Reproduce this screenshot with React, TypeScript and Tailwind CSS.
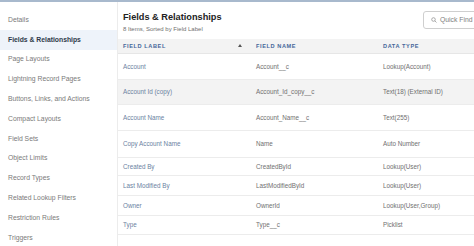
import React from 'react';

const navItems = [
  'Details',
  'Fields & Relationships',
  'Page Layouts',
  'Lightning Record Pages',
  'Buttons, Links, and Actions',
  'Compact Layouts',
  'Field Sets',
  'Object Limits',
  'Record Types',
  'Related Lookup Filters',
  'Restriction Rules',
  'Triggers',
];

const rows = [
  { label: 'Account', name: 'Account__c', type: 'Lookup(Account)', h: 'h-[26px]' },
  { label: 'Account Id (copy)', name: 'Account_Id_copy__c', type: 'Text(18) (External ID)', h: 'h-[25px]', shaded: true },
  { label: 'Account Name', name: 'Account_Name__c', type: 'Text(255)', h: 'h-[26px]' },
  { label: 'Copy Account Name', name: 'Name', type: 'Auto Number', h: 'h-[27px]' },
  { label: 'Created By', name: 'CreatedById', type: 'Lookup(User)', h: 'h-[18px]' },
  { label: 'Last Modified By', name: 'LastModifiedById', type: 'Lookup(User)', h: 'h-[20px]' },
  { label: 'Owner', name: 'OwnerId', type: 'Lookup(User,Group)', h: 'h-[20px]' },
  { label: 'Type', name: 'Type__c', type: 'Picklist', h: 'h-[19px]' },
  { label: '', name: '', type: '', h: 'h-[20px]' },
];

export default function App() {
  return (
    <div
      className="w-[474px] h-[246px] overflow-hidden bg-white text-[#6a6a6a]"
      style={{ fontFamily: '"Liberation Sans", Arial, sans-serif' }}
    >
      <div className="h-[2px] bg-[#a8b9cd]" />
      <div className="flex h-[244px]">
        {/* Sidebar */}
        <aside className="w-[118px] shrink-0 border-r border-[#ececec] pt-[8px]">
          {navItems.map((item, i) => (
            <div
              key={item}
              className={`h-[19.8px] flex items-center pl-[8px] text-[6.8px] ${
                i === 1 ? 'bg-[#eef3fa] font-bold text-[#2f3a4a]' : 'text-[#7a7a7a]'
              }`}
            >
              {item}
            </div>
          ))}
        </aside>

        {/* Main */}
        <main className="flex-1 min-w-0">
          <div className="flex justify-between h-[35px]">
            <div className="pl-[5px] pt-[10px]">
              <h1 className="text-[9.2px] font-bold text-[#222] leading-[11px]">Fields &amp; Relationships</h1>
              <p className="text-[6px] text-[#707070] mt-[3px] leading-[7px]">8 Items, Sorted by Field Label</p>
            </div>
            <div className="mt-[9px] w-[62px] h-[18px] border border-[#cfcfcf] rounded-[3px] flex items-center gap-[3px] pl-[7px] shrink-0 -mr-[11px]">
              <svg width="6" height="6" viewBox="0 0 12 12" fill="none" stroke="#8a8a8a" strokeWidth="1.4">
                <circle cx="5" cy="5" r="3.6" />
                <path d="M7.7 7.7 L11 11" />
              </svg>
              <span className="text-[6.8px] text-[#808080]">Quick Find</span>
            </div>
          </div>

          {/* Table header */}
          <div className="mt-[2px] h-[15px] bg-[#f3f3f3] border-b border-[#e6e6e6] grid grid-cols-[133px_127px_1fr] items-center text-[5.6px] font-bold tracking-[0.6px] text-[#47679a]">
            <div className="pl-[5px] pr-[9px] flex items-center justify-between">
              <span>FIELD LABEL</span>
              <svg width="4" height="3" viewBox="0 0 4 3" fill="#555">
                <path d="M2 0 L4 3 L0 3 Z" />
              </svg>
            </div>
            <div className="pl-[5px]">FIELD NAME</div>
            <div className="pl-[5px]">DATA TYPE</div>
          </div>

          {/* Rows */}
          {rows.map((r, i) => (
            <div
              key={i}
              className={`${r.h} grid grid-cols-[133px_127px_1fr] items-center border-b border-[#ececec] text-[6.3px] ${
                r.shaded ? 'bg-[#f3f3f3]' : ''
              }`}
            >
              <div className="pl-[5px] text-[#6b82a1]">{r.label}</div>
              <div className="pl-[5px] text-[#707070]">{r.name}</div>
              <div className="pl-[5px] text-[#707070]">{r.type}</div>
            </div>
          ))}
        </main>
      </div>
    </div>
  );
}
